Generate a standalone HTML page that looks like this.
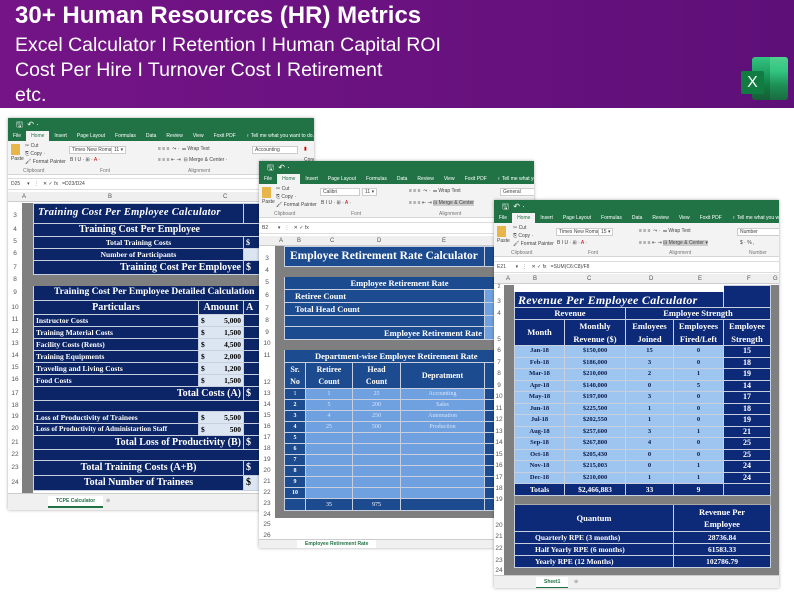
<!DOCTYPE html>
<html><head><meta charset="utf-8"><style>
*{margin:0;padding:0;box-sizing:border-box}
body{width:794px;height:596px;background:#fff;position:relative;overflow:hidden;font-family:"Liberation Sans",sans-serif}
.hdr{position:absolute;left:0;top:0;width:794px;height:108px;background:linear-gradient(90deg,#741486,#6a1280 50%,#5e0f78)}
.hdr .t{position:absolute;left:15px;top:2px;color:#fff;font-weight:bold;font-size:24px;white-space:nowrap}
.hdr .s{position:absolute;left:15px;color:#fff;font-size:19.5px;white-space:nowrap}
.win{position:absolute;background:#fff;overflow:hidden;box-shadow:0 0 3px rgba(0,0,0,.35)}
.tb{position:absolute;left:0;top:0;right:0;height:13px;background:#217346;color:#fff;font-size:8px;padding-left:8px;line-height:13px}
.tabs{position:absolute;left:0;top:13px;right:0;height:10px;background:#217346;color:#fff;font-size:5px;line-height:10px;white-space:nowrap}
.tabs span{display:inline-block;padding:0 5px}
.tabs span.h{background:#f3f3f3;color:#217346}
.rib{position:absolute;left:0;top:23px;right:0;height:34px;background:#f3f3f3;border-bottom:1px solid #d6d6d6;font-size:5px;color:#444;white-space:nowrap}
.rib i{position:absolute;font-style:normal}
.fb{position:absolute;left:0;right:0;height:12px;background:#fff;border-top:1px solid #ddd;border-bottom:1px solid #ddd;font-size:5px;color:#444;line-height:11px}
.ch{position:absolute;left:0;right:0;height:10px;background:#efefef;border-bottom:1px solid #ccc;font-size:6px;color:#555;line-height:10px}
.ch i{position:absolute;font-style:normal}
.rh{position:absolute;font-size:6.5px;color:#555;text-align:center}
.tabbar{position:absolute;left:0;right:0;background:#f0f0f0;border-top:1px solid #ccc;font-size:5px}
.tabbar b{position:absolute;color:#217346;background:#fff;border-bottom:2px solid #217346;padding:2px 8px}
table{position:absolute;border-collapse:collapse;table-layout:fixed;font-family:"Liberation Serif",serif;font-weight:bold;color:#fff}
td{padding:0 2px;overflow:hidden;white-space:nowrap;line-height:1;border:1px solid #c8d0e0}
.n1{background:#0c2566}.l1{background:#dce6f2;color:#000}
.n2{background:#1d4b90}.l2{background:#6fa0e0;color:#d8e6f8}
.n3{background:#0d2a79}.l3{background:#9ec4f0;color:#0b1c48}
.g{background:#7f7f7f;border-color:#7f7f7f}
.c{text-align:center}.r{text-align:right}
.it{font-style:italic;letter-spacing:.3px}
</style></head><body>
<div class="hdr">
<div class="t">30+ Human Resources (HR) Metrics</div>
<div class="s" style="top:34px">Excel Calculator I Retention I Human Capital ROI</div>
<div class="s" style="top:59px">Cost Per Hire I Turnover Cost I Retirement</div>
<div class="s" style="top:84px">etc.</div>
<div style="position:absolute;left:752px;top:57px;width:36px;height:43px;border-radius:3px;background:linear-gradient(180deg,#33c481 0,#21a366 33%,#107c41 66%,#185c37 100%)"></div>
<div style="position:absolute;left:770px;top:57px;width:18px;height:43px;border-radius:0 3px 3px 0;background:linear-gradient(180deg,#4fd08f 0,#33c481 33%,#1d8f55 66%,#1a6b40 100%)"></div>
<div style="position:absolute;left:741px;top:71px;width:23px;height:23px;border-radius:2px;background:#107c41;color:#fff;font-size:16px;line-height:23px;text-align:center">X</div>
</div>

<!-- Window 1 -->
<div class="win" style="left:8px;top:118px;width:306px;height:392px">
<div class="tb">🖫 &nbsp;↶ ·</div>
<div class="tabs"><span>File</span><span class="h">Home</span><span>Insert</span><span>Page Layout</span><span>Formulas</span><span>Data</span><span>Review</span><span>View</span><span>Foxit PDF</span><span>♀ Tell me what you want to do...</span></div>
<div class="rib"><i style="left:3px;top:3px;width:9px;height:11px;background:#e8b54a"></i><i style="left:3px;top:15px">Paste</i><i style="left:17px;top:2px">✂ Cut</i><i style="left:17px;top:10px">⎘ Copy ·</i><i style="left:17px;top:18px">🖌 Format Painter</i><i style="left:15px;top:27px;color:#777">Clipboard</i>
<i style="left:61px;top:5px;background:#fff;border:1px solid #ccc;padding:0 2px">Times New Roma ▾</i><i style="left:103px;top:5px;background:#fff;border:1px solid #ccc;padding:0 2px">11 ▾</i><i style="left:62px;top:16px">B I U · ⊞ · <span style="color:#c00">A</span> ·</i><i style="left:92px;top:27px;color:#777">Font</i>
<i style="left:150px;top:5px">≡ ≡ ≡ &nbsp;⤳ · &nbsp;▭ Wrap Text</i><i style="left:150px;top:16px">≡ ≡ ≡ ⇤ ⇥ &nbsp;⊟ Merge &amp; Center ·</i><i style="left:180px;top:27px;color:#777">Alignment</i>
<i style="left:244px;top:5px;background:#fff;border:1px solid #ccc;padding:0 2px;width:46px">Accounting</i><i style="left:296px;top:5px;color:#c00">▮</i><i style="left:296px;top:16px">Cond</i></div>
<div class="fb" style="top:60px"><span style="padding-left:3px">D25 &nbsp; &nbsp; ▾ &nbsp; ⋮ &nbsp; ✕ ✓ fx &nbsp; =D23/D24</span></div>
<div class="ch" style="top:74px"><i style="left:14px">A</i><i style="left:100px">B</i><i style="left:215px">C</i></div>
<div style="position:absolute;left:14px;top:85px;width:11px;height:290px;background:#7f7f7f"></div>
<div style="position:absolute;left:25px;top:85px;width:240px;height:287px;background:#7f7f7f"></div>
<div class="rh" style="left:0;top:85px;width:14px;line-height:1">
<div style="height:20px;padding-top:10px">3</div><div style="height:13px;padding-top:4px">4</div><div style="height:12px;padding-top:3px">5</div><div style="height:12px;padding-top:3px">6</div><div style="height:14px;padding-top:5px">7</div><div style="height:11px;padding-top:3px">8</div><div style="height:15px;padding-top:5px">9</div><div style="height:14px;padding-top:5px">10</div><div style="height:12px;padding-top:3px">11</div><div style="height:12px;padding-top:3px">12</div><div style="height:12px;padding-top:3px">13</div><div style="height:12px;padding-top:3px">14</div><div style="height:12px;padding-top:3px">15</div><div style="height:12px;padding-top:3px">16</div><div style="height:14px;padding-top:5px">17</div><div style="height:11px;padding-top:3px">18</div><div style="height:12px;padding-top:3px">19</div><div style="height:12px;padding-top:3px">20</div><div style="height:14px;padding-top:5px">21</div><div style="height:11px;padding-top:3px">22</div><div style="height:15px;padding-top:5px">23</div><div style="height:15px;padding-top:5px">24</div></div>
<table style="left:25px;top:85px;width:240px">
<colgroup><col style="width:165px"><col style="width:45px"><col style="width:30px"></colgroup>
<tr style="height:20px"><td colspan="2" class="n1 it" style="font-size:10.5px;padding-left:4px">Training Cost Per Employee Calculator</td><td class="n1"></td></tr>
<tr style="height:13px"><td colspan="3" class="n1 c" style="font-size:10px;padding-right:30px">Training Cost Per Employee</td></tr>
<tr style="height:12px"><td colspan="2" class="n1 c" style="font-size:7.5px">Total Training Costs</td><td class="n1" style="font-size:8px">$</td></tr>
<tr style="height:12px"><td colspan="2" class="n1 c" style="font-size:7.5px">Number of Participants</td><td class="l1"></td></tr>
<tr style="height:14px"><td colspan="2" class="n1 r" style="font-size:10px">Training Cost Per Employee</td><td class="n1" style="font-size:10px">$</td></tr>
<tr style="height:11px"><td colspan="3" class="g"></td></tr>
<tr style="height:15px"><td colspan="3" class="n1" style="font-size:9.5px;padding-left:20px">Training Cost Per Employee Detailed Calculation</td></tr>
<tr style="height:14px"><td class="n1 c" style="font-size:10px">Particulars</td><td class="n1 c" style="font-size:10px">Amount</td><td class="n1" style="font-size:10px">A</td></tr>
<tr style="height:12px"><td class="n1" style="font-size:7.5px">Instructor Costs</td><td class="l1" style="font-size:7.5px">$ <span style="float:right">5,000</span></td><td class="n1"></td></tr>
<tr style="height:12px"><td class="n1" style="font-size:7.5px">Training Material Costs</td><td class="l1" style="font-size:7.5px">$ <span style="float:right">1,500</span></td><td class="n1"></td></tr>
<tr style="height:12px"><td class="n1" style="font-size:7.5px">Facility Costs (Rents)</td><td class="l1" style="font-size:7.5px">$ <span style="float:right">4,500</span></td><td class="n1"></td></tr>
<tr style="height:12px"><td class="n1" style="font-size:7.5px">Training Equipments</td><td class="l1" style="font-size:7.5px">$ <span style="float:right">2,000</span></td><td class="n1"></td></tr>
<tr style="height:12px"><td class="n1" style="font-size:7.5px">Traveling and Living Costs</td><td class="l1" style="font-size:7.5px">$ <span style="float:right">1,200</span></td><td class="n1"></td></tr>
<tr style="height:12px"><td class="n1" style="font-size:7.5px">Food Costs</td><td class="l1" style="font-size:7.5px">$ <span style="float:right">1,500</span></td><td class="n1"></td></tr>
<tr style="height:14px"><td colspan="2" class="n1 r" style="font-size:10px">Total Costs (A)</td><td class="n1" style="font-size:10px">$</td></tr>
<tr style="height:11px"><td colspan="3" class="n1"></td></tr>
<tr style="height:12px"><td class="n1" style="font-size:7.5px">Loss of Productivity of Trainees</td><td class="l1" style="font-size:7.5px">$ <span style="float:right">5,500</span></td><td class="n1"></td></tr>
<tr style="height:12px"><td class="n1" style="font-size:7px">Loss of Productivity of Administartion Staff</td><td class="l1" style="font-size:7.5px">$ <span style="float:right">500</span></td><td class="n1"></td></tr>
<tr style="height:14px"><td colspan="2" class="n1 r" style="font-size:10px">Total Loss of Productivity (B)</td><td class="n1" style="font-size:10px">$</td></tr>
<tr style="height:11px"><td colspan="3" class="n1"></td></tr>
<tr style="height:15px"><td colspan="2" class="n1 c" style="font-size:10px">Total Training Costs (A+B)</td><td class="n1" style="font-size:10px">$</td></tr>
<tr style="height:15px"><td colspan="2" class="n1 c" style="font-size:10px">Total Number of Trainees</td><td class="l1" style="font-size:10px">$</td></tr>
</table>
<div class="tabbar" style="top:375px;height:17px"><b style="left:40px;top:2px">TCPE Calculator</b><span style="position:absolute;left:98px;top:4px;color:#888">⊕</span></div>
</div>

<!-- Window 2 -->
<div class="win" style="left:259px;top:161px;width:275px;height:387px">
<div class="tb">🖫 &nbsp;↶ ·</div>
<div class="tabs"><span>File</span><span class="h">Home</span><span>Insert</span><span>Page Layout</span><span>Formulas</span><span>Data</span><span>Review</span><span>View</span><span>Foxit PDF</span><span>♀ Tell me what you</span></div>
<div class="rib"><i style="left:3px;top:3px;width:9px;height:11px;background:#e8b54a"></i><i style="left:3px;top:15px">Paste</i><i style="left:17px;top:2px">✂ Cut</i><i style="left:17px;top:10px">⎘ Copy ·</i><i style="left:17px;top:18px">🖌 Format Painter</i><i style="left:15px;top:27px;color:#777">Clipboard</i>
<i style="left:61px;top:4px;background:#fff;border:1px solid #ccc;padding:0 2px;width:40px">Calibri</i><i style="left:103px;top:4px;background:#fff;border:1px solid #ccc;padding:0 2px">11 ▾</i><i style="left:62px;top:16px">B I U · ⊞ · <span style="color:#c00">A</span> ·</i><i style="left:92px;top:27px;color:#777">Font</i>
<i style="left:150px;top:4px">≡ ≡ ≡ &nbsp;⤳ · &nbsp;▭ Wrap Text</i><i style="left:150px;top:16px">≡ ≡ ≡ ⇤ ⇥ <span style="background:#ccc">⊟ Merge &amp; Center</span></i><i style="left:180px;top:27px;color:#777">Alignment</i>
<i style="left:241px;top:4px;background:#fff;border:1px solid #ccc;padding:0 2px;width:40px">General</i></div>
<div class="fb" style="top:61px"><span style="padding-left:3px">B2 &nbsp; &nbsp; &nbsp; ▾ &nbsp; ⋮ &nbsp; ✕ ✓ fx</span></div>
<div class="ch" style="top:75px"><i style="left:20px">A</i><i style="left:38px">B</i><i style="left:71px">C</i><i style="left:118px">D</i><i style="left:183px">E</i></div>
<div style="position:absolute;left:16px;top:85px;width:259px;height:272px;background:#7f7f7f"></div>
<div class="rh" style="left:0;top:85px;width:16px;line-height:1">
<div style="height:20px;padding-top:10px">3</div><div style="height:10px;padding-top:2px">4</div><div style="height:13px;padding-top:4px">5</div><div style="height:13px;padding-top:4px">6</div><div style="height:13px;padding-top:4px">7</div><div style="height:11px;padding-top:3px">8</div><div style="height:13px;padding-top:4px">9</div><div style="height:10px;padding-top:2px">10</div><div style="height:13px;padding-top:4px">11</div><div style="height:26px;padding-top:18px">12</div><div style="height:11px;padding-top:3px">13</div><div style="height:11px;padding-top:3px">14</div><div style="height:11px;padding-top:3px">15</div><div style="height:11px;padding-top:3px">16</div><div style="height:11px;padding-top:3px">17</div><div style="height:11px;padding-top:3px">18</div><div style="height:11px;padding-top:3px">19</div><div style="height:11px;padding-top:3px">20</div><div style="height:11px;padding-top:3px">21</div><div style="height:11px;padding-top:3px">22</div><div style="height:12px;padding-top:3px">23</div><div style="height:9px;padding-top:2px">24</div><div style="height:11px;padding-top:3px">25</div><div style="height:11px;padding-top:3px">26</div></div>
<table style="left:25px;top:85px;width:230px">
<colgroup><col style="width:21px"><col style="width:47px"><col style="width:48px"><col style="width:84px"><col style="width:30px"></colgroup>
<tr style="height:20px"><td colspan="4" class="n2" style="font-size:11.5px;padding-left:5px">Employee Retirement Rate Calculator</td><td class="n2"></td></tr>
<tr style="height:10px"><td colspan="5" class="g"></td></tr>
<tr style="height:13px"><td colspan="5" class="n2 c" style="font-size:8.5px">Employee Retirement Rate</td></tr>
<tr style="height:13px"><td colspan="4" class="n2" style="font-size:8.5px;padding-left:10px">Retiree Count</td><td class="l2"></td></tr>
<tr style="height:13px"><td colspan="4" class="n2" style="font-size:8.5px;padding-left:10px">Total Head Count</td><td class="l2"></td></tr>
<tr style="height:11px"><td colspan="4" class="n2"></td><td class="l2"></td></tr>
<tr style="height:13px"><td colspan="4" class="n2 r" style="font-size:8.5px">Employee Retirement Rate</td><td class="l2"></td></tr>
<tr style="height:10px"><td colspan="5" class="g"></td></tr>
<tr style="height:13px"><td colspan="5" class="n2" style="font-size:8.5px;padding-left:30px">Department-wise Employee Retirement Rate</td></tr>
<tr style="height:26px"><td class="n2 c" style="font-size:8px;white-space:normal;line-height:1.4">Sr.<br>No</td><td class="n2 c" style="font-size:8px;line-height:1.4">Retiree<br>Count</td><td class="n2 c" style="font-size:8px;line-height:1.4">Head<br>Count</td><td class="n2 c" style="font-size:8px">Depratment</td><td class="n2"></td></tr>
<tr style="height:11px;font-weight:normal"><td class="n2 c" style="font-size:6px">1</td><td class="l2 c" style="font-size:6px;font-weight:normal">1</td><td class="l2 c" style="font-size:6px;font-weight:normal">25</td><td class="l2 c" style="font-size:6px;font-weight:normal">Accounting</td><td class="n2"></td></tr>
<tr style="height:11px"><td class="n2 c" style="font-size:6px">2</td><td class="l2 c" style="font-size:6px;font-weight:normal">5</td><td class="l2 c" style="font-size:6px;font-weight:normal">200</td><td class="l2 c" style="font-size:6px;font-weight:normal">Sales</td><td class="n2"></td></tr>
<tr style="height:11px"><td class="n2 c" style="font-size:6px">3</td><td class="l2 c" style="font-size:6px;font-weight:normal">4</td><td class="l2 c" style="font-size:6px;font-weight:normal">250</td><td class="l2 c" style="font-size:6px;font-weight:normal">Automation</td><td class="n2"></td></tr>
<tr style="height:11px"><td class="n2 c" style="font-size:6px">4</td><td class="l2 c" style="font-size:6px;font-weight:normal">25</td><td class="l2 c" style="font-size:6px;font-weight:normal">500</td><td class="l2 c" style="font-size:6px;font-weight:normal">Production</td><td class="n2"></td></tr>
<tr style="height:11px"><td class="n2 c" style="font-size:6px">5</td><td class="l2"></td><td class="l2"></td><td class="l2"></td><td class="n2"></td></tr>
<tr style="height:11px"><td class="n2 c" style="font-size:6px">6</td><td class="l2"></td><td class="l2"></td><td class="l2"></td><td class="n2"></td></tr>
<tr style="height:11px"><td class="n2 c" style="font-size:6px">7</td><td class="l2"></td><td class="l2"></td><td class="l2"></td><td class="n2"></td></tr>
<tr style="height:11px"><td class="n2 c" style="font-size:6px">8</td><td class="l2"></td><td class="l2"></td><td class="l2"></td><td class="n2"></td></tr>
<tr style="height:11px"><td class="n2 c" style="font-size:6px">9</td><td class="l2"></td><td class="l2"></td><td class="l2"></td><td class="n2"></td></tr>
<tr style="height:11px"><td class="n2 c" style="font-size:6px">10</td><td class="l2"></td><td class="l2"></td><td class="l2"></td><td class="n2"></td></tr>
<tr style="height:12px"><td class="n2"></td><td class="n2 c" style="font-size:6px;font-weight:normal">35</td><td class="n2 c" style="font-size:6px;font-weight:normal">975</td><td class="n2"></td><td class="n2"></td></tr>
</table>
<div class="tabbar" style="top:378px;height:9px"><b style="left:38px;top:0;padding:1px 8px">Employee Retirement Rate</b></div>
</div>

<!-- Window 3 -->
<div class="win" style="left:494px;top:200px;width:285px;height:388px">
<div class="tb">🖫 &nbsp;↶ ·</div>
<div class="tabs"><span>File</span><span class="h">Home</span><span>Insert</span><span>Page Layout</span><span>Formulas</span><span>Data</span><span>Review</span><span>View</span><span>Foxit PDF</span><span>♀ Tell me what you want</span></div>
<div class="rib"><i style="left:3px;top:3px;width:9px;height:11px;background:#e8b54a"></i><i style="left:3px;top:15px">Paste</i><i style="left:19px;top:2px">✂ Cut</i><i style="left:19px;top:10px">⎘ Copy ·</i><i style="left:19px;top:18px">🖌 Format Painter</i><i style="left:17px;top:27px;color:#777">Clipboard</i>
<i style="left:62px;top:5px;background:#fff;border:1px solid #ccc;padding:0 2px">Times New Roma ▾</i><i style="left:104px;top:5px;background:#fff;border:1px solid #ccc;padding:0 2px">15 ▾</i><i style="left:63px;top:17px">B I U · ⊞ · <span style="color:#c00">A</span> ·</i><i style="left:94px;top:27px;color:#777">Font</i>
<i style="left:145px;top:5px">≡ ≡ ≡ &nbsp;⤳ · &nbsp;▭ Wrap Text</i><i style="left:145px;top:17px">≡ ≡ ≡ ⇤ ⇥ <span style="background:#ccc">⊟ Merge &amp; Center ▾</span></i><i style="left:175px;top:27px;color:#777">Alignment</i>
<i style="left:243px;top:5px;background:#fff;border:1px solid #ccc;padding:0 2px;width:45px">Number</i><i style="left:246px;top:17px">$ · % ,</i><i style="left:255px;top:27px;color:#777">Number</i></div>
<div class="fb" style="top:61px"><span style="padding-left:3px">E21 &nbsp; &nbsp; &nbsp; ▾ &nbsp; ⋮ &nbsp; ✕ ✓ fx &nbsp; =SUM(C6:C8)/F8</span></div>
<div class="ch" style="top:74px"><i style="left:12px">A</i><i style="left:39px">B</i><i style="left:93px">C</i><i style="left:155px">D</i><i style="left:204px">E</i><i style="left:253px">F</i><i style="left:279px">G</i></div>
<div style="position:absolute;left:10px;top:85px;width:275px;height:290px;background:#7f7f7f"></div>
<div class="rh" style="left:0;top:85px;width:10px;line-height:1">
<div style="height:6px;font-size:5px">2</div><div style="height:16px;padding-top:8px">3</div><div style="height:12px;padding-top:4px">4</div><div style="height:26px;padding-top:18px">5</div>
<div style="height:11.5px;padding-top:3px">6</div><div style="height:11.5px;padding-top:3px">7</div><div style="height:11.5px;padding-top:3px">8</div><div style="height:11.5px;padding-top:3px">9</div><div style="height:11.5px;padding-top:3px">10</div><div style="height:11.5px;padding-top:3px">11</div><div style="height:11.5px;padding-top:3px">12</div><div style="height:11.5px;padding-top:3px">13</div><div style="height:11.5px;padding-top:3px">14</div><div style="height:11.5px;padding-top:3px">15</div><div style="height:11.5px;padding-top:3px">16</div><div style="height:11.5px;padding-top:3px">17</div><div style="height:12px;padding-top:3px">18</div><div style="height:9px;padding-top:2px">19</div><div style="height:27px;padding-top:19px">20</div><div style="height:12px;padding-top:3px">21</div><div style="height:12px;padding-top:3px">22</div><div style="height:12px;padding-top:3px">23</div><div style="height:9px;padding-top:1px">24</div></div>
<table style="left:20px;top:85px;width:256px">
<colgroup><col style="width:50px"><col style="width:61px"><col style="width:48px"><col style="width:50px"><col style="width:47px"></colgroup>
<tr style="height:6px"><td colspan="4" style="background:#fff;border-color:#fff"></td><td class="n3" rowspan="2"></td></tr>
<tr style="height:16px"><td colspan="4" class="n3 it" style="font-size:12px;padding-left:3px">Revenue Per Employee Calculator</td></tr>
<tr style="height:12px"><td colspan="2" class="n3 c" style="font-size:8.5px">Revenue</td><td colspan="3" class="n3 c" style="font-size:8.5px">Employee Strength</td></tr>
<tr style="height:26px"><td class="n3 c" style="font-size:8.5px">Month</td><td class="n3 c" style="font-size:8.5px;line-height:1.45">Monthly<br>Revenue ($)</td><td class="n3 c" style="font-size:8.5px;line-height:1.45">Emloyees<br>Joined</td><td class="n3 c" style="font-size:8.5px;line-height:1.45">Employees<br>Fired/Left</td><td class="n3 c" style="font-size:8.5px;line-height:1.45">Employee<br>Strength</td></tr>
<tr style="height:11.5px"><td class="l3 c" style="font-size:6.5px">Jan-18</td><td class="l3 c" style="font-size:6.5px">$150,000</td><td class="l3 c" style="font-size:6.5px">15</td><td class="l3 c" style="font-size:6.5px">0</td><td class="n3 c" style="font-size:8px">15</td></tr>
<tr style="height:11.5px"><td class="l3 c" style="font-size:6.5px">Feb-18</td><td class="l3 c" style="font-size:6.5px">$186,000</td><td class="l3 c" style="font-size:6.5px">3</td><td class="l3 c" style="font-size:6.5px">0</td><td class="n3 c" style="font-size:8px">18</td></tr>
<tr style="height:11.5px"><td class="l3 c" style="font-size:6.5px">Mar-18</td><td class="l3 c" style="font-size:6.5px">$210,000</td><td class="l3 c" style="font-size:6.5px">2</td><td class="l3 c" style="font-size:6.5px">1</td><td class="n3 c" style="font-size:8px">19</td></tr>
<tr style="height:11.5px"><td class="l3 c" style="font-size:6.5px">Apr-18</td><td class="l3 c" style="font-size:6.5px">$140,000</td><td class="l3 c" style="font-size:6.5px">0</td><td class="l3 c" style="font-size:6.5px">5</td><td class="n3 c" style="font-size:8px">14</td></tr>
<tr style="height:11.5px"><td class="l3 c" style="font-size:6.5px">May-18</td><td class="l3 c" style="font-size:6.5px">$197,000</td><td class="l3 c" style="font-size:6.5px">3</td><td class="l3 c" style="font-size:6.5px">0</td><td class="n3 c" style="font-size:8px">17</td></tr>
<tr style="height:11.5px"><td class="l3 c" style="font-size:6.5px">Jun-18</td><td class="l3 c" style="font-size:6.5px">$225,500</td><td class="l3 c" style="font-size:6.5px">1</td><td class="l3 c" style="font-size:6.5px">0</td><td class="n3 c" style="font-size:8px">18</td></tr>
<tr style="height:11.5px"><td class="l3 c" style="font-size:6.5px">Jul-18</td><td class="l3 c" style="font-size:6.5px">$202,550</td><td class="l3 c" style="font-size:6.5px">1</td><td class="l3 c" style="font-size:6.5px">0</td><td class="n3 c" style="font-size:8px">19</td></tr>
<tr style="height:11.5px"><td class="l3 c" style="font-size:6.5px">Aug-18</td><td class="l3 c" style="font-size:6.5px">$257,600</td><td class="l3 c" style="font-size:6.5px">3</td><td class="l3 c" style="font-size:6.5px">1</td><td class="n3 c" style="font-size:8px">21</td></tr>
<tr style="height:11.5px"><td class="l3 c" style="font-size:6.5px">Sep-18</td><td class="l3 c" style="font-size:6.5px">$267,800</td><td class="l3 c" style="font-size:6.5px">4</td><td class="l3 c" style="font-size:6.5px">0</td><td class="n3 c" style="font-size:8px">25</td></tr>
<tr style="height:11.5px"><td class="l3 c" style="font-size:6.5px">Oct-18</td><td class="l3 c" style="font-size:6.5px">$205,430</td><td class="l3 c" style="font-size:6.5px">0</td><td class="l3 c" style="font-size:6.5px">0</td><td class="n3 c" style="font-size:8px">25</td></tr>
<tr style="height:11.5px"><td class="l3 c" style="font-size:6.5px">Nov-18</td><td class="l3 c" style="font-size:6.5px">$215,003</td><td class="l3 c" style="font-size:6.5px">0</td><td class="l3 c" style="font-size:6.5px">1</td><td class="n3 c" style="font-size:8px">24</td></tr>
<tr style="height:11.5px"><td class="l3 c" style="font-size:6.5px">Dec-18</td><td class="l3 c" style="font-size:6.5px">$210,000</td><td class="l3 c" style="font-size:6.5px">1</td><td class="l3 c" style="font-size:6.5px">1</td><td class="n3 c" style="font-size:8px">24</td></tr>
<tr style="height:12px"><td class="n3 c" style="font-size:7.5px">Totals</td><td class="n3 c" style="font-size:7.5px">$2,466,883</td><td class="n3 c" style="font-size:7.5px">33</td><td class="n3 c" style="font-size:7.5px">9</td><td class="n3"></td></tr>
<tr style="height:9px"><td colspan="5" class="g" style="border-color:#aaa"></td></tr>
<tr style="height:27px"><td colspan="3" class="n3 c" style="font-size:8.5px">Quantum</td><td colspan="2" class="n3 c" style="font-size:8.5px;line-height:1.45">Revenue Per<br>Employee</td></tr>
<tr style="height:12px"><td colspan="3" class="n3" style="font-size:7.5px;padding-left:20px">Quarterly RPE (3 months)</td><td colspan="2" class="n3 c" style="font-size:7.5px">28736.84</td></tr>
<tr style="height:12px"><td colspan="3" class="n3" style="font-size:7.5px;padding-left:20px">Half Yearly RPE (6 months)</td><td colspan="2" class="n3 c" style="font-size:7.5px">61583.33</td></tr>
<tr style="height:12px"><td colspan="3" class="n3" style="font-size:7.5px;padding-left:20px">Yearly RPE (12 Months)</td><td colspan="2" class="n3 c" style="font-size:7.5px">102786.79</td></tr>
</table>
<div class="tabbar" style="top:375px;height:13px"><b style="left:42px;top:1px">Sheet1</b><span style="position:absolute;left:80px;top:3px;color:#888">⊕</span></div>
</div>
</body></html>
